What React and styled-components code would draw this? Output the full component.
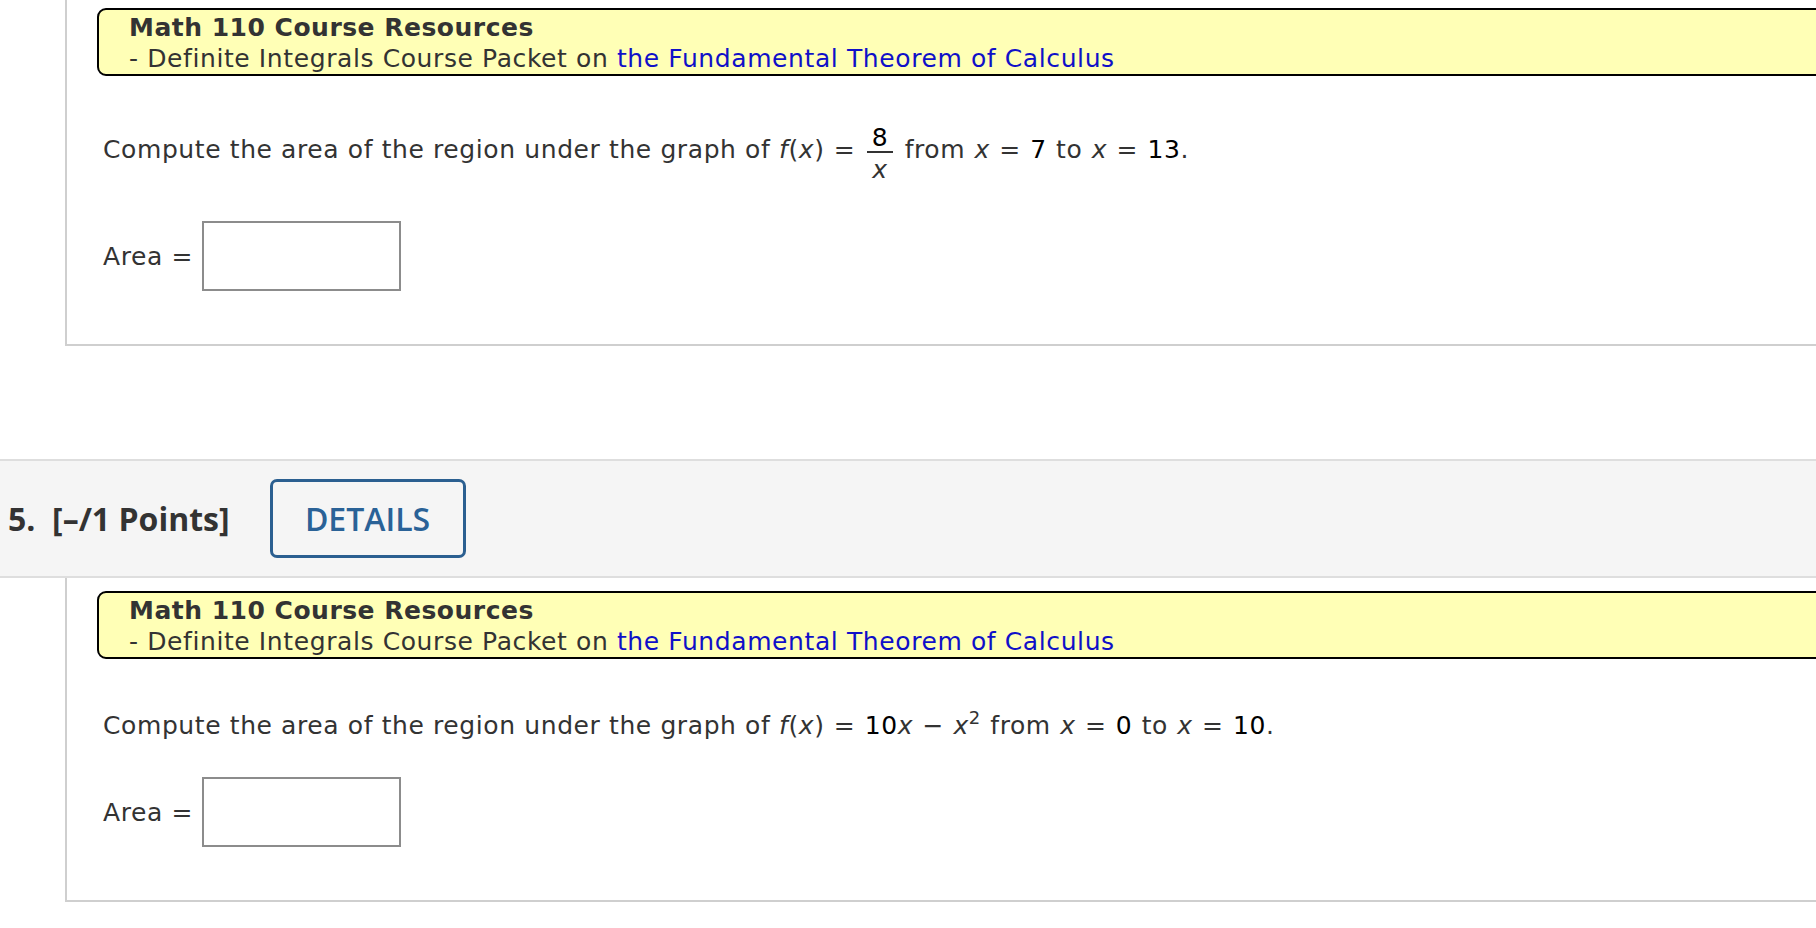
import React from 'react';
import styled, { createGlobalStyle } from 'styled-components';

const GlobalStyle = createGlobalStyle`
  html, body {
    margin: 0;
    padding: 0;
    background: #fff;
    overflow: hidden;
  }
  body {
    font-family: "DejaVu Sans", Verdana, sans-serif;
    color: #333;
  }
`;

const Page = styled.div`
  width: 1816px;
  height: 928px;
  overflow: hidden;
`;

const QuestionPanel = styled.div`
  margin-left: 65px;
  border-left: 2px solid #cfcfcf;
  border-bottom: 2px solid #cfcfcf;
  padding: ${({ top }) => top}px 0 ${({ bottom }) => bottom}px 30px;
`;

const ResourceBox = styled.div`
  margin-right: -60px;
  background: #ffffb6;
  border: 2px solid #000;
  border-radius: 9px 0 0 9px;
  padding: 2px 0 0 30px;
  font-size: 25px;
  letter-spacing: 0.6px;
  line-height: 31px;
  color: #333;
`;

const ResourceTitle = styled.div`
  font-weight: bold;
  letter-spacing: 0.5px;
`;

const ResourceLink = styled.a`
  color: #1010c8;
  text-decoration: none;
`;

const Prompt = styled.p`
  margin: ${({ top }) => top}px 0 0 6px;
  font-size: 25px;
  letter-spacing: 0.6px;
  line-height: 31px;
`;

// the math part of the sentence is set a little looser
const MathTail = styled.span`
  word-spacing: 0.8px;
`;

const Var = styled.i`
  font-style: italic;
`;

const Num = styled.span`
  color: #000;
`;

const Sup = styled.sup`
  font-size: 0.72em;
  line-height: 0;
  vertical-align: 0.55em;
`;

const Fraction = styled.span`
  display: inline-flex;
  flex-direction: column;
  align-items: center;
  vertical-align: 12px;
  margin: 0 2px;
`;

const Numerator = styled.span`
  line-height: 22px;
  padding: 0 5px 2px;
  border-bottom: 2px solid #333;
  color: #000;
`;

const Denominator = styled.span`
  line-height: 22px;
  padding: 6px 3px 4px;
  font-style: italic;
`;

const AnswerRow = styled.div`
  display: flex;
  align-items: center;
  margin: ${({ top }) => top}px 0 0 6px;
  font-size: 25px;
  letter-spacing: 0.6px;
`;

const AnswerInput = styled.input`
  box-sizing: border-box;
  width: 199px;
  height: 70px;
  margin-left: 9px;
  border: 2px solid #8c8c8c;
  background: #fff;
  font-size: 22px;
`;

const QuestionHeader = styled.div`
  margin-top: 113px;
  display: flex;
  align-items: center;
  gap: 40px;
  height: 115px;
  padding-left: 8px;
  background: #f5f5f5;
  border-top: 2px solid #dedede;
  border-bottom: 2px solid #dedede;
  font-family: "Open Sans", "Noto Sans", sans-serif;
`;

const QuestionNumber = styled.div`
  font-size: 32px;
  font-weight: 700;
  color: #333;
  white-space: pre;
`;

const DetailsButton = styled.button`
  box-sizing: border-box;
  width: 196px;
  height: 79px;
  background: transparent;
  border: 3px solid #2b5f90;
  border-radius: 7px;
  color: #2a6297;
  font-family: "Open Sans", "Noto Sans", sans-serif;
  font-size: 32px;
  font-weight: 600;
  cursor: pointer;
`;

const Resources = () => (
  <ResourceBox>
    <ResourceTitle>Math 110 Course Resources</ResourceTitle>
    <div>
      - Definite Integrals Course Packet on{' '}
      <ResourceLink href="#">the Fundamental Theorem of Calculus</ResourceLink>
    </div>
  </ResourceBox>
);

const Answer = ({ top }) => (
  <AnswerRow top={top}>
    Area =
    <AnswerInput type="text" />
  </AnswerRow>
);

export default function App() {
  return (
    <Page>
      <GlobalStyle />
      <QuestionPanel top={8} bottom={53}>
        <Resources />
        <Prompt top={51}>
          Compute the area of the region under the graph of{' '}
          <MathTail>
            <Var>f</Var>(<Var>x</Var>) ={' '}
            <Fraction>
              <Numerator>8</Numerator>
              <Denominator>x</Denominator>
            </Fraction>{' '}
            from <Var>x</Var> = <Num>7</Num> to <Var>x</Var> = <Num>13</Num>.
          </MathTail>
        </Prompt>
        <Answer top={36} />
      </QuestionPanel>

      <QuestionHeader>
        <QuestionNumber>{'5.  [–/1 Points]'}</QuestionNumber>
        <DetailsButton>DETAILS</DetailsButton>
      </QuestionHeader>

      <QuestionPanel top={13} bottom={53}>
        <Resources />
        <Prompt top={51}>
          Compute the area of the region under the graph of{' '}
          <MathTail>
            <Var>f</Var>(<Var>x</Var>) = <Num>10</Num>
            <Var>x</Var> − <Var>x</Var>
            <Sup>2</Sup> from <Var>x</Var> = <Num>0</Num> to <Var>x</Var> = <Num>10</Num>.
          </MathTail>
        </Prompt>
        <Answer top={36} />
      </QuestionPanel>
    </Page>
  );
}
